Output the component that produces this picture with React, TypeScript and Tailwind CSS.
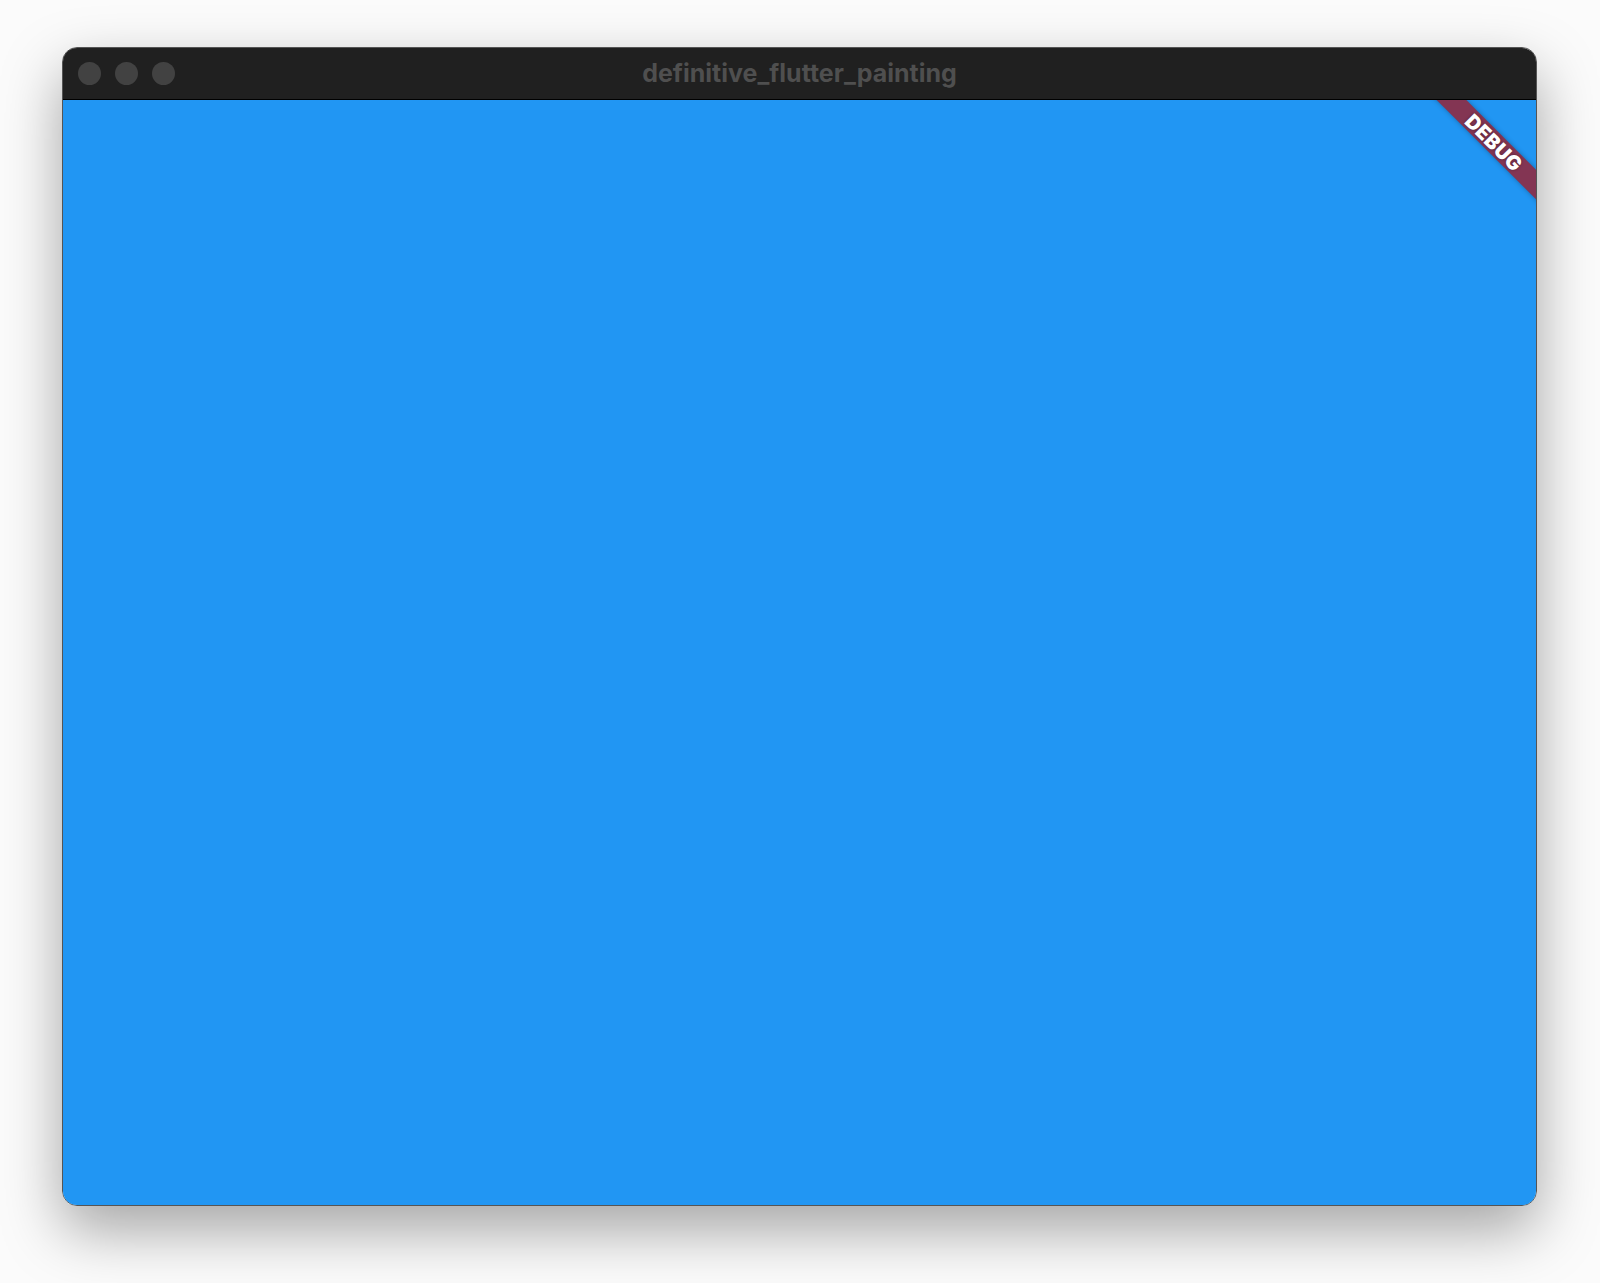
import React from 'react';

const TrafficLights: React.FC = () => (
    <div className="absolute left-[15px] top-0 h-full flex items-center gap-[14px]">
        <div className="w-[23px] h-[23px] rounded-full bg-[#424242]"></div>
        <div className="w-[23px] h-[23px] rounded-full bg-[#424242]"></div>
        <div className="w-[23px] h-[23px] rounded-full bg-[#424242]"></div>
    </div>
);

const DebugBanner: React.FC = () => (
    <div className="absolute top-[32px] -right-[58px] w-[200px] h-[21px] rotate-45 bg-[#833553] shadow-[0_0_5px_rgba(0,0,0,0.3)] flex items-center justify-center pointer-events-none">
        <span
            className="text-white text-[20px] font-black leading-none tracking-[0.3px] [text-shadow:0_0_3px_rgba(0,0,0,0.4)]"
            style={{ fontFamily: 'Inter, "Liberation Sans", Arial, sans-serif' }}
        >
            DEBUG
        </span>
    </div>
);

export default function App() {
    return (
        <div className="min-h-[1283px] w-[1600px] bg-[#fbfbfb] pt-[47px] pl-[62px]">
            <div className="w-[1475px] h-[1159px] flex flex-col rounded-[15px] overflow-hidden border border-[#555] shadow-[0_24px_60px_rgba(0,0,0,0.35)]">
                {/* Title bar */}
                <div className="relative h-[52px] shrink-0 bg-[#202020] border-b border-black flex items-center justify-center">
                    <TrafficLights />
                    <span
                        className="text-[#4f4f4f] text-[25px] font-bold leading-none"
                        style={{ fontFamily: 'Inter, "Liberation Sans", Arial, sans-serif' }}
                    >
                        definitive_flutter_painting
                    </span>
                </div>
                {/* Flutter view */}
                <div className="relative flex-1 bg-[#2196f3] overflow-hidden">
                    <DebugBanner />
                </div>
            </div>
        </div>
    );
}
